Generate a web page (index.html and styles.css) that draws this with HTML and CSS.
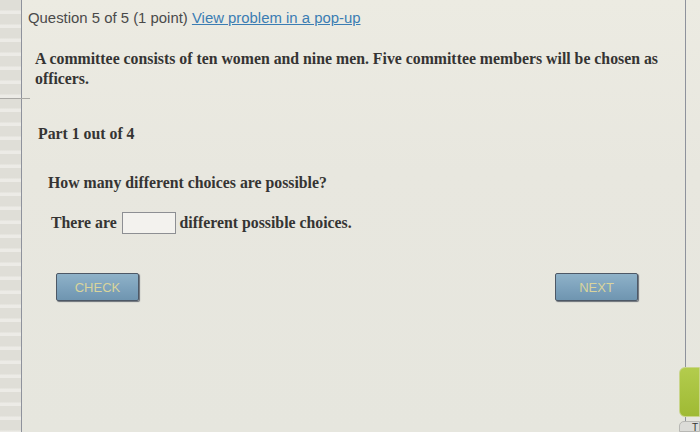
FILE: index.html
```html
<!DOCTYPE html>
<html>
<head>
<meta charset="utf-8">
<link rel="stylesheet" href="styles.css">
</head>
<body>
<div class="screen">
  <div class="side">
    <div class="side-rule"></div>
  </div>
  <div class="card">
    <div class="header">Question 5 of 5 (1 point) <a class="link" href="#">View problem in a pop-up</a></div>
    <p class="problem">A committee consists of ten women and nine men. Five committee members will be chosen as officers.</p>
    <p class="part">Part 1 out of 4</p>
    <p class="question">How many different choices are possible?</p>
    <p class="answer">There are <span class="box"></span> different possible choices.</p>
    <div class="buttons">
      <button class="btn">CHECK</button>
      <button class="btn">NEXT</button>
    </div>
  </div>
  <div class="rail">
    <div class="green-tab"></div>
    <div class="gray-tab">T</div>
  </div>
</div>
</body>
</html>
```
FILE: styles.css
```css
html, body {
  margin: 0;
  padding: 0;
  width: 700px;
  height: 432px;
  overflow: hidden;
}
.screen {
  display: flex;
  width: 700px;
  height: 432px;
  background: linear-gradient(180deg, #ecebe2 0%, #e8e7df 40%, #e6e6de 100%);
}
.side {
  width: 21px;
  flex: none;
  background: repeating-linear-gradient(180deg, #dfded7 0px, #dfded7 10px, #ecebe6 11px, #ecebe6 14px);
  border-right: 1px solid #8e929c;
  position: relative;
}
.side-rule {
  position: absolute;
  top: 98px;
  left: 0;
  width: 30px;
  height: 1px;
  background: #a9a8a4;
}
.card {
  flex: 1;
  padding: 9px 0 0 6px;
  color: #353433;
  font-family: "Liberation Serif", serif;
  font-weight: bold;
  font-size: 15.8px;
  line-height: 20px;
}
.header {
  font-family: "Liberation Sans", Arial, sans-serif;
  font-weight: normal;
  font-size: 14.9px;
  line-height: 18px;
  color: #4a4a4a;
}
.link {
  color: #3b7db3;
  text-decoration: underline;
}
.problem {
  margin: 22px 0 0 7px;
  width: 632px;
}
.part {
  margin: 35px 0 0 10px;
}
.question {
  margin: 29px 0 0 20px;
}
.answer {
  margin: 19px 0 0 23px;
  display: flex;
  align-items: center;
  white-space: pre;
}
.box {
  display: inline-block;
  width: 52px;
  height: 20px;
  border: 1px solid #8d8f93;
  background: #f3f2ee;
  margin: 0 0 0 1px;
}
.buttons {
  display: flex;
  justify-content: space-between;
  margin: 39px 0 0 28px;
  width: 582px;
}
.btn {
  width: 83px;
  height: 28px;
  border: 1px solid #4d5866;
  border-radius: 2px;
  background: linear-gradient(180deg, #8fb2c8 0%, #7ea3bd 50%, #6f95b0 100%);
  color: #d9d49c;
  font-family: "Liberation Sans", Arial, sans-serif;
  font-size: 13px;
  padding: 0;
  box-shadow: 1px 1px 1px #6b7078;
}
.rail {
  width: 14px;
  flex: none;
  border-left: 1px solid #8e929c;
  display: flex;
  flex-direction: column;
  justify-content: flex-end;
  gap: 4px;
}
.green-tab {
  height: 48px;
  margin-left: -7px;
  border-radius: 6px 0 0 6px;
  background: linear-gradient(180deg, #b3cc4d, #9fba34);
  border: 1px solid #c9d58a;
}
.gray-tab {
  height: 9px;
  margin-left: -7px;
  border-radius: 5px 0 0 0;
  background: #dcdcd8;
  border: 1px solid #b8b8b4;
  font-family: "Liberation Sans", Arial, sans-serif;
  font-size: 10px;
  color: #333;
  padding-left: 12px;
  line-height: 12px;
  overflow: hidden;
}
```
